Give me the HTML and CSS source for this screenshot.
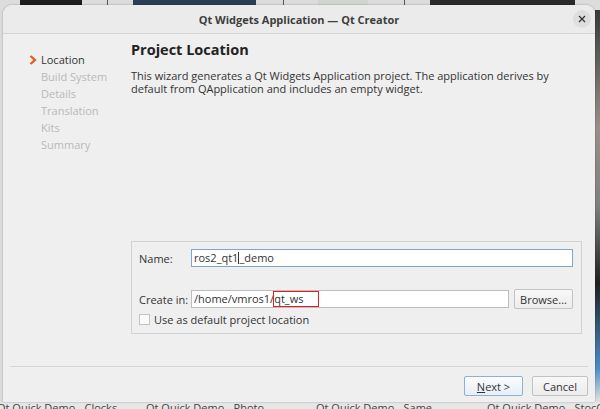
FILE: index.html
```html
<!DOCTYPE html>
<html lang="en">
<head>
    <meta charset="UTF-8">
    <title>Qt Widgets Application — Qt Creator</title>
    <link rel="stylesheet" href="styles.css">
</head>
<body>
    <!-- Desktop behind the dialog -->
    <div class="backdrop">
        <div class="thumb t1"></div>
        <div class="thumb t2"></div>
        <div class="thumb t3"></div>
        <div class="thumb t4"></div>
        <div class="vline l1"></div>
        <div class="vline l2"></div>
        <div class="vline l3"></div>
        <div class="side-strip"></div>
        <div class="demo-row">
            <span class="d1">Qt Quick Demo - Clocks</span>
            <span class="d2">Qt Quick Demo - Photo</span>
            <span class="d3">Qt Quick Demo - Same</span>
            <span class="d4">Qt Quick Demo - StocQt</span>
        </div>
    </div>

    <div class="dialog">
        <div class="titlebar">
            <span class="title">Qt Widgets Application — Qt Creator</span>
            <span class="close">
                <svg width="10" height="10" viewBox="0 0 10 10"><path d="M2 2 L8 8 M8 2 L2 8" stroke="#333" stroke-width="1.3"/></svg>
            </span>
        </div>

        <div class="body">
            <ul class="steps">
                <li class="active">
                    <svg class="arrow" width="8" height="10" viewBox="0 0 8 10"><path d="M1.5 1 L6 5 L1.5 9" fill="none" stroke="#e95420" stroke-width="2.2"/></svg>
                    Location
                </li>
                <li>Build System</li>
                <li>Details</li>
                <li>Translation</li>
                <li>Kits</li>
                <li>Summary</li>
            </ul>

            <div class="page">
                <h1>Project Location</h1>
                <p class="desc">This wizard generates a Qt Widgets Application project. The application derives by default from QApplication and includes an empty widget.</p>

                <div class="group">
                    <div class="row">
                        <label class="lbl">Name:</label>
                        <div class="field focus">ros2_qt1<span class="caret"></span>_demo</div>
                    </div>
                    <div class="row create">
                        <label class="lbl">Create in:</label>
                        <div class="field path">/home/vmros1/<span class="mark">qt_ws</span></div>
                        <button class="btn browse">Browse...</button>
                    </div>
                    <div class="check-row">
                        <span class="box"></span>
                        <span>Use as default project location</span>
                    </div>
                </div>
            </div>
        </div>

        <div class="footer">
            <button class="btn next"><u>N</u>ext &gt;</button>
            <button class="btn cancel">Cancel</button>
        </div>
    </div>
</body>
</html>
```

FILE: styles.css
```css
body {
    margin: 0;
    width: 600px;
    height: 409px;
    overflow: hidden;
    background: #dcdcdc;
    font-family: "Open Sans", "Noto Sans", sans-serif;
    font-size: 11px;
    color: #333;
    position: relative;
}

/* backdrop */
.backdrop {
    position: absolute;
    inset: 0;
}
.thumb {
    position: absolute;
    top: 0;
    height: 6px;
}
.t1 { left: 20px; width: 62px; background: #1e1e1e; }
.t2 { left: 133px; width: 123px; background: #2c3e55; }
.t3 { left: 318px; width: 50px; background: #cfd6cf; }
.t4 { left: 430px; width: 145px; background: #2a2a2a; }
.vline {
    position: absolute;
    top: 0;
    width: 1px;
    height: 6px;
    background: #555;
}
.l1 { left: 107px; }
.l2 { left: 283px; }
.l3 { left: 404px; }
.side-strip {
    position: absolute;
    right: 0;
    top: 10px;
    width: 5px;
    height: 390px;
    background: linear-gradient(#3a3a3a, #9a8f88 30%, #808080 50%, #202020 70%, #4b8fc7 92%, #ddd);
}
.demo-row {
    position: absolute;
    left: 0;
    top: 402px;
    width: 600px;
    height: 7px;
    overflow: hidden;
    background: #e6e6e6;
    font-size: 11px;
    color: #444;
    line-height: 14px;
}
.demo-row span { position: absolute; top: -1px; white-space: nowrap; }
.d1 { left: -3px; }
.d2 { left: 146px; }
.d3 { left: 316px; }
.d4 { left: 487px; }

/* dialog */
.dialog {
    position: absolute;
    left: 3px;
    top: 5px;
    width: 592px;
    height: 397px;
    background: #efefef;
    border-radius: 9px 9px 0 0;
    box-shadow: 0 0 2px rgba(0, 0, 0, 0.35);
    display: flex;
    flex-direction: column;
}
.titlebar {
    height: 28px;
    flex: none;
    border-bottom: 1px solid #d4d4d4;
    background: #ebebeb;
    border-radius: 9px 9px 0 0;
    display: flex;
    align-items: center;
    justify-content: center;
    position: relative;
}
.title {
    font-weight: bold;
    font-size: 11px;
    color: #3d3d3d;
}
.close {
    position: absolute;
    right: 4px;
    top: 5px;
    width: 18px;
    height: 18px;
    border-radius: 50%;
    background: #dedede;
    display: flex;
    align-items: center;
    justify-content: center;
}

.body {
    display: flex;
    flex: 1;
}
.steps {
    list-style: none;
    margin: 0;
    padding: 17px 0 0 38px;
    width: 90px;
}
.steps li {
    height: 17px;
    line-height: 17px;
    color: #b9b9b9;
    position: relative;
}
.steps li.active { color: #333; }
.arrow {
    position: absolute;
    left: -12px;
    top: 4px;
}

.page {
    flex: 1;
    padding: 4px 13px 0 0;
}
h1 {
    margin: 0;
    font-size: 14.5px;
    font-weight: bold;
    color: #222;
    line-height: 24px;
}
.desc {
    margin: 7px 0 0;
    line-height: 13px;
    width: 440px;
}

.group {
    margin-top: 146px;
    border: 1px solid #d2d2d2;
    height: 93px;
    padding: 6px 8px 0 7px;
    box-sizing: border-box;
}
.row {
    display: flex;
    align-items: center;
    height: 20px;
}
.row.create { margin-top: 21px; }
.lbl {
    width: 52px;
    flex: none;
}
.field {
    flex: 1;
    height: 18px;
    border: 1px solid #bdbdbd;
    background: #fff;
    box-sizing: border-box;
    padding-left: 2px;
    line-height: 16px;
    white-space: nowrap;
    position: relative;
}
.field.focus { border-color: #7fa6c9; }
.caret {
    display: inline-block;
    width: 1px;
    height: 12px;
    background: #333;
    vertical-align: -2px;
}
.mark {
    outline: 1.5px solid #e02020;
    display: inline-block;
    width: 44px;
    line-height: 14px;
}
.btn {
    font-family: inherit;
    font-size: 11px;
    color: #333;
    background: linear-gradient(#f8f8f8, #ececec);
    border: 1px solid #c2c2c2;
    border-radius: 2px;
    height: 20px;
    padding: 0;
}
.browse {
    width: 59px;
    margin-left: 5px;
}
.check-row {
    display: flex;
    align-items: center;
    margin-top: 3px;
    gap: 4px;
}
.box {
    width: 11px;
    height: 11px;
    border: 1px solid #c4c4c4;
    background: #fafafa;
    box-sizing: border-box;
}

.footer {
    height: 36px;
    flex: none;
    box-sizing: border-box;
    margin: 0 7px;
    border-top: 1px solid #d6d6d6;
    display: flex;
    justify-content: flex-end;
    align-items: flex-start;
    padding: 9px 0 0 0;
    gap: 9px;
}
.next {
    width: 59px;
    border-color: #8fb1d0;
    background: linear-gradient(#fbfdff, #e6eef6);
}
.cancel { width: 56px; }
```
